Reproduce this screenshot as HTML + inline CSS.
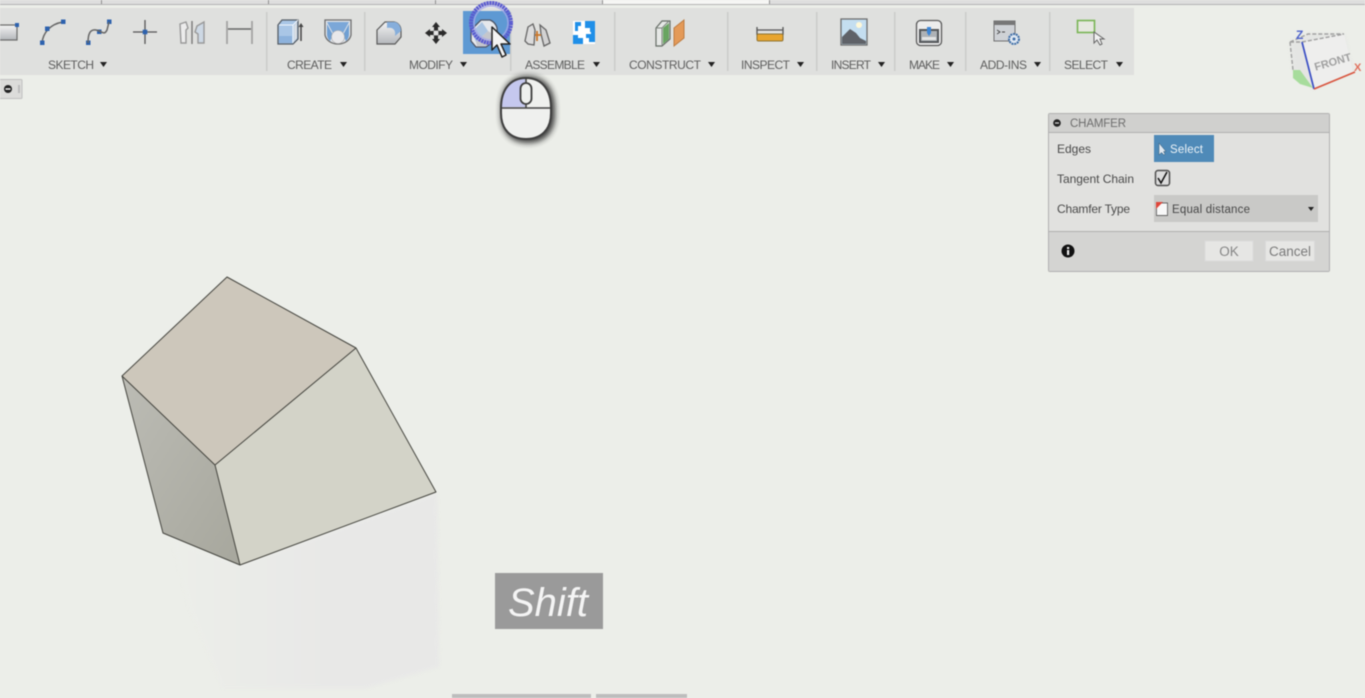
<!DOCTYPE html>
<html><head><meta charset="utf-8"><style>
html,body{margin:0;padding:0;width:1365px;height:698px;overflow:hidden;background:#eceee9}
svg{position:absolute;left:0;top:0;filter:blur(.55px)}
text{font-family:"Liberation Sans",sans-serif}
.l{font-size:12px;fill:#5e5e5e}
.p{font-size:12px;fill:#4a4a4a}
</style></head><body>
<svg width="1365" height="698" viewBox="0 0 1365 698" xmlns="http://www.w3.org/2000/svg">
<defs>
<linearGradient id="g1" x1="0" y1="0" x2="0" y2="1"><stop offset="0" stop-color="#f4f4f4"/><stop offset="1" stop-color="#b4b7bb"/></linearGradient>
<linearGradient id="left" x1="0" y1="0" x2="1" y2="1"><stop offset="0" stop-color="#bcbcb5"/><stop offset="1" stop-color="#a7a79d"/></linearGradient>
<linearGradient id="shd" gradientUnits="userSpaceOnUse" x1="170" y1="0" x2="330" y2="0"><stop offset="0" stop-color="#eceee9"/><stop offset="1" stop-color="#e8e8e7"/></linearGradient>
<filter id="sh" x="-30%" y="-30%" width="160%" height="160%"><feGaussianBlur stdDeviation="3"/></filter>
<filter id="s2" x="-10%" y="-10%" width="120%" height="120%"><feGaussianBlur stdDeviation="1.500"/></filter>
</defs>
<!-- tab strip -->
<rect width="1365" height="4" fill="#dedede"/>
<rect x="603" width="166" height="4" fill="#f6f6f4"/>
<rect y="4" width="1365" height="1" fill="#b4b4b4"/>
<g fill="#8f8f8f"><rect x="101" width="1" height="4"/><rect x="268" width="1" height="4"/><rect x="435" width="1" height="4"/><rect x="602" width="1" height="4"/><rect x="769" width="1" height="4"/></g>
<!-- toolbar -->
<rect x="0" y="8" width="1134" height="67" fill="#dfe0de"/>
<g fill="#cbccca"><rect x="266" y="12" width="1.500" height="59"/><rect x="364" y="12" width="1.500" height="59"/><rect x="510" y="12" width="1.500" height="59"/><rect x="614" y="12" width="1.500" height="59"/><rect x="727" y="12" width="1.500" height="59"/><rect x="816" y="12" width="1.500" height="59"/><rect x="894" y="12" width="1.500" height="59"/><rect x="965" y="12" width="1.500" height="59"/><rect x="1049" y="12" width="1.500" height="59"/></g>
<!-- labels -->
<g>
<text class="l" x="48" y="69" textLength="46">SKETCH</text>
<text class="l" x="287" y="69" textLength="45">CREATE</text>
<text class="l" x="409" y="69" textLength="44">MODIFY</text>
<text class="l" x="525" y="69" textLength="60">ASSEMBLE</text>
<text class="l" x="629" y="69" textLength="72">CONSTRUCT</text>
<text class="l" x="741" y="69" textLength="49">INSPECT</text>
<text class="l" x="831" y="69" textLength="40">INSERT</text>
<text class="l" x="909" y="69" textLength="31">MAKE</text>
<text class="l" x="980" y="69" textLength="47">ADD-INS</text>
<text class="l" x="1064" y="69" textLength="44">SELECT</text>
</g>
<g fill="#222">
<path d="M100 62h7l-3.500 5z"/><path d="M340 62h7l-3.500 5z"/><path d="M460 62h7l-3.500 5z"/><path d="M593 62h7l-3.500 5z"/><path d="M708 62h7l-3.500 5z"/><path d="M797 62h7l-3.500 5z"/><path d="M878 62h7l-3.500 5z"/><path d="M947 62h7l-3.500 5z"/><path d="M1034 62h7l-3.500 5z"/><path d="M1116 62h7l-3.500 5z"/>
</g>
<!-- sketch icons -->
<rect x="-3" y="25" width="20" height="15" fill="url(#g1)" stroke="#6a6a6a" stroke-width="1.200"/>
<rect x="15" y="23" width="4" height="4" fill="#2d62ae"/>
<path d="M42 43C43 33 50 24 63 22" fill="none" stroke="#666" stroke-width="1.500"/>
<g fill="#2d62ae"><rect x="40" y="40.500" width="4.500" height="4.500"/><rect x="45" y="26.500" width="4.500" height="4.500"/><rect x="61" y="19.500" width="4.500" height="4.500"/>
<rect x="86" y="40.500" width="4.500" height="4.500"/><rect x="97" y="29.500" width="4.500" height="4.500"/><rect x="107" y="19.500" width="4.500" height="4.500"/></g>
<path d="M88 43C88 34 90 29 96 30S104 36 107 30L109 22" fill="none" stroke="#666" stroke-width="1.500"/>
<path d="M133 32H157M145 20V44" stroke="#555" stroke-width="1.300" fill="none"/>
<rect x="142.700" y="29.700" width="4.600" height="4.600" fill="#2d62ae"/>
<path d="M180 24L186 22L188 28L186 30V43H181Z" fill="#ececec" stroke="#999" stroke-width="1.400"/>
<path d="M204 22L197 26L195 32L198 34V43H204Z" fill="#cdd8e4" stroke="#999" stroke-width="1.400"/>
<path d="M192 21V44" stroke="#777" stroke-width="1.400"/>
<path d="M227 21V44M252 21V44" stroke="#a0a0a0" stroke-width="1.700"/>
<path d="M228 29H251" stroke="#666" stroke-width="1.400"/>
<!-- create -->
<path d="M278 25L282 20H298V39L293 44H278Z" fill="#a9c6e6" stroke="#555d66" stroke-width="1.300"/>
<path d="M279 25H293V43M293 25L298 20" fill="none" stroke="#f2f6fb" stroke-width="1"/>
<path d="M294 26L297 22V38L294 42Z" fill="#d9dee4"/>
<path d="M279 36H292V43H279Z" fill="#8db2dc"/>
<path d="M301 41V26" stroke="#444" stroke-width="1.500"/><path d="M298.500 27L301 23L303.500 27Z" fill="#444"/>
<path d="M325 20H351V35C350 40 345 44 338 44C331 44 326 40 325 35Z" fill="#dfe3e8" stroke="#6e6e6e" stroke-width="1.300"/>
<path d="M327 22H349L343 33H333Z" fill="#7ba7d8"/>
<path d="M327 24L333 35L330 41C328 39 327 37 327 34Z" fill="#6f9fd3"/>
<path d="M349 24L343 35L346 41C348 39 349 37 349 34Z" fill="#6f9fd3"/>
<circle cx="338" cy="37" r="6.500" fill="#e8e8ea" stroke="#aaa" stroke-width=".6"/>
<!-- modify -->
<path d="M377 30L385 22H394C399 23 401 27 401 31V37L395 44H377Z" fill="url(#g1)" stroke="#5a5a5a" stroke-width="1.200"/>
<path d="M387 22H395C399 23 401 27 401 31L395 36C396 30 393 27 387 28Z" fill="#86aedb"/>
<path d="M436 22L440 27H438V31H442V29L447 33L442 37V35H438V39H440L436 44L432 39H434V35H430V37L425 33L430 29V31H434V27H432Z" fill="#2b2b2b"/>
<rect x="433.500" y="30.500" width="5" height="5" fill="#e6e6e6" stroke="#666" stroke-width=".5"/>
<!-- chamfer active -->
<rect x="463" y="11" width="47" height="43" fill="#5e99d3"/>
<path d="M471 30L481 20H490C495 22 498 27 497 32L496 40L486 47H476L471 41Z" fill="#e6e8ec" stroke="#4d5566" stroke-width="1.300"/>
<path d="M472 32L482 22L488 31L476 42Z" fill="#a9c4e2"/>
<path d="M476 42L488 31L496 36V40L486 46H477Z" fill="#c4c6cc"/>
<circle cx="491" cy="23" r="20" fill="none" stroke="#5a5ad0" stroke-width="4" stroke-dasharray="2.200 .6"/>
<circle cx="491" cy="23" r="17" fill="none" stroke="#a6a8ea" stroke-width="1.500" opacity=".8"/>
<path d="M492 27V50L497 45L502 57L506 55L501 44H510Z" fill="#f4f4f4" stroke="#222" stroke-width="1.500" stroke-linejoin="round"/>
<!-- assemble -->
<path d="M525 41L528 27L533 24L535 30L534 45L528 44Z" fill="#dcdcdc" stroke="#666" stroke-width="1.300"/>
<path d="M540 25L546 30L550 43L544 46L541 34Z" fill="#d2d2d2" stroke="#666" stroke-width="1.300"/>
<path d="M535 35H541M537 31V41" stroke="#c9762a" stroke-width="1.800"/>
<rect x="573" y="21" width="22" height="23" fill="#fff"/>
<path d="M573 35H578V38H583V44H573ZM585 21H595V32H590V28H585ZM575 22H581V26H578V31H575ZM586 34H591V29H595V42H589V38H586Z" fill="#1f8fe8"/>
<!-- construct -->
<path d="M656 28L662 21H670V39L662 46H656Z" fill="#e6e8e6" stroke="#666d66" stroke-width="1.200"/>
<path d="M662 28V45M656 28H662L669 21" stroke="#7d857d" fill="none" stroke-width="1"/>
<path d="M663 28L669 23V39L663 44Z" fill="#69a461"/>
<path d="M674 28L684 20V38L674 46Z" fill="#e49a58" stroke="#bd7c42" stroke-width="1"/>
<!-- inspect -->
<path d="M757 27V35M783 27V35M757 30H783" stroke="#555" stroke-width="1.300" fill="none"/>
<rect x="757" y="34" width="26" height="7" rx="1.500" fill="#e8a52f" stroke="#8f7434" stroke-width="1"/>
<!-- insert -->
<rect x="841" y="19" width="26" height="26" fill="#c4def0" stroke="#6f6f6f" stroke-width="1.300"/>
<circle cx="859" cy="25" r="3" fill="#fff8d8"/>
<path d="M842 44V37L850 29L856 33L860 38L866 41V44Z" fill="#5f6268"/>
<!-- make -->
<rect x="916.500" y="20.500" width="25" height="25" rx="4" fill="#ececec" stroke="#5a5a5a" stroke-width="1.300"/>
<rect x="919" y="29" width="20" height="14" fill="#54575a"/>
<rect x="921" y="31" width="16" height="10" fill="#aeb2b6"/>
<rect x="922" y="37" width="14" height="3" fill="#e4e4e4"/>
<path d="M927 27H931V33L929 36L927 33Z" fill="#3d86d6"/>
<!-- add-ins -->
<rect x="994" y="21" width="21" height="20" fill="#cfd2d6" stroke="#6f6f6f" stroke-width="1"/>
<rect x="994" y="21" width="21" height="4" fill="#777"/>
<path d="M997 30L1000 32L997 34M1002 32H1005" stroke="#444" stroke-width=".9" fill="none"/>
<circle cx="1014" cy="39" r="5" fill="#dfe8f2" stroke="#3f6ea8" stroke-width="2" stroke-dasharray="2 .8"/>
<circle cx="1014" cy="39" r="1.500" fill="#3f6ea8"/>
<!-- select -->
<rect x="1077.500" y="20.500" width="17" height="12" fill="#e6e8e0" stroke="#7ab555" stroke-width="1.600"/>
<path d="M1094 32V43L1097 40L1100 45L1102 44L1100 39H1104Z" fill="#f1f1f1" stroke="#666" stroke-width="1"/>
<!-- small browser tab -->
<rect x="-2" y="79.500" width="24" height="19" rx="1" fill="#dcdcda" stroke="#c0c0c0"/>
<circle cx="8" cy="89" r="4" fill="#222"/><rect x="5.500" y="88.300" width="5" height="1.400" fill="#fff"/>
<rect x="18" y="85" width="2" height="8" fill="#bbb"/>
<!-- mouse -->
<path d="M501 108C501 88 510 76 527 76C545 76 555 88 555 110V115C555 133 544 143 528 143C511 143 501 133 501 115Z" fill="#222" opacity=".85" filter="url(#sh)"/>
<path d="M501 108C501 90 510 78 526 78C542 78 551 90 551 108V113C551 130 541 139 526 139C511 139 501 130 501 113Z" fill="#eff0ee"/>
<path d="M501 107C502 90 511 79 525 79V107Z" fill="#c5c8ee"/>
<path d="M501 108H551M526 78V84M526 102V108" stroke="#444" stroke-width="1.600" fill="none"/>
<path d="M501 108C501 90 510 78 526 78C542 78 551 90 551 108V113C551 130 541 139 526 139C511 139 501 130 501 113Z" fill="none" stroke="#3f3f3f" stroke-width="2"/>
<rect x="520.500" y="83" width="11" height="21" rx="5.500" fill="#eef0ee" stroke="#3f3f3f" stroke-width="1.800"/>
<!-- nav cube -->
<path d="M1290 42L1308 34H1344L1353 72L1314 89L1293 70Z" fill="#e4e5e3" filter="url(#s2)"/>
<path d="M1302 42L1344 34L1353 72L1314 89Z" fill="#eeeeed"/>
<path d="M1290 42L1308 34H1344M1290 42L1302 42L1344 34M1290 42L1293 70" stroke="#a0a0a0" stroke-width="1.400" stroke-dasharray="4 2" fill="none"/>
<path d="M1293 70H1300L1313 88L1300 84L1293 78Z" fill="#a7dc9c"/>
<path d="M1314 89L1302 42" stroke="#3a4fc4" stroke-width="1.700"/>
<path d="M1314 89L1355 72" stroke="#d8553f" stroke-width="1.700"/>
<text x="1296" y="39" font-size="12" font-weight="bold" fill="#4f64cc">Z</text>
<text x="1354" y="71" font-size="11" font-weight="bold" fill="#e0705d">X</text>
<text x="1314" y="67" font-size="11" font-weight="bold" fill="#a0a0a0" transform="rotate(-16 1328 63)">FRONT</text>
<!-- chamfer panel -->
<rect x="1048.500" y="113.500" width="281" height="158" rx="1.500" fill="#e1e1df" stroke="#b0b0b0"/>
<rect x="1049" y="114" width="280" height="18" fill="#d0d0ce"/>
<rect x="1049" y="132" width="280" height="1" fill="#b0b0b0"/>
<rect x="1049" y="232" width="280" height="39" fill="#d4d4d2"/>
<rect x="1049" y="231" width="280" height="1" fill="#b0b0b0"/>
<circle cx="1057" cy="123" r="3.800" fill="#222"/><rect x="1055" y="122.400" width="4" height="1.200" fill="#ddd"/>
<text x="1070" y="127" font-size="11.500" fill="#6e6e6e" textLength="56">CHAMFER</text>
<text class="p" x="1057" y="153" textLength="34">Edges</text>
<text class="p" x="1057" y="183" textLength="77">Tangent Chain</text>
<text class="p" x="1057" y="213" textLength="73">Chamfer Type</text>
<rect x="1154" y="135" width="60" height="27" fill="#4f8ab8"/>
<path d="M1159 143V155L1161.500 152.500L1164 155L1165 154L1163.500 151.500H1166Z" fill="#dfe8f0" stroke="#35566f" stroke-width=".5"/>
<text x="1170" y="153" font-size="11.500" fill="#eef4f8" textLength="33">Select</text>
<rect x="1155.500" y="170.500" width="14" height="15" rx="2.500" fill="#dcdcdc" stroke="#4f4f4f" stroke-width="1.500"/>
<path d="M1158 178L1161 183L1167 172" fill="none" stroke="#111" stroke-width="1.500"/>
<rect x="1154" y="195" width="164" height="27" fill="#c9c9c7"/>
<path d="M1156.500 203H1167.500V215.500H1156.500Z" fill="#f8f8f8" stroke="#666" stroke-width=".9"/>
<path d="M1156 202H1163L1156 209Z" fill="#e0463a"/>
<text x="1172" y="213" font-size="11.500" fill="#474747" textLength="78">Equal distance</text>
<path d="M1308 207H1314L1311 211Z" fill="#222"/>
<circle cx="1068" cy="251" r="6.500" fill="#111"/>
<rect x="1067" y="250" width="2.200" height="5" fill="#eee"/><rect x="1067" y="247" width="2.200" height="2" fill="#eee"/>
<rect x="1205" y="241" width="48" height="20" fill="#e6e6e4" stroke="#dadada"/>
<rect x="1265.500" y="241" width="49" height="20" fill="#e6e6e4" stroke="#dadada"/>
<text x="1229" y="256" font-size="13.500" fill="#858585" text-anchor="middle">OK</text>
<text x="1290" y="256" font-size="13.500" fill="#7a7a7a" text-anchor="middle">Cancel</text>
<!-- shadow + solid -->
<path d="M172 540L240 565L437 493L439 667L367 688H222L190 610Z" fill="url(#shd)" filter="url(#s2)"/>
<path d="M227 277L356 348L215 465L122 376Z" fill="#cdc7bb"/>
<path d="M356 348L436 492L240 565L215 465Z" fill="#d3d3c8"/>
<path d="M122 376L215 465L240 565L163 533Z" fill="url(#left)"/>
<g fill="none" stroke="#44443e" stroke-width="1" stroke-linejoin="round">
<path d="M227 277L356 348L436 492L240 565L163 533L122 376Z"/>
<path d="M122 376L215 465L356 348M215 465L240 565"/>
</g>
<!-- shift -->
<rect x="495" y="573" width="108" height="56" fill="#9a9a9a"/>
<text x="548" y="616" font-size="40" font-style="italic" fill="#f4f4f4" text-anchor="middle">Shift</text>
<!-- bottom -->
<rect x="452" y="694" width="139" height="4" fill="#bdbdbd"/>
<rect x="596" y="694" width="91" height="4" fill="#bdbdbd"/>
</svg>
</body></html>
